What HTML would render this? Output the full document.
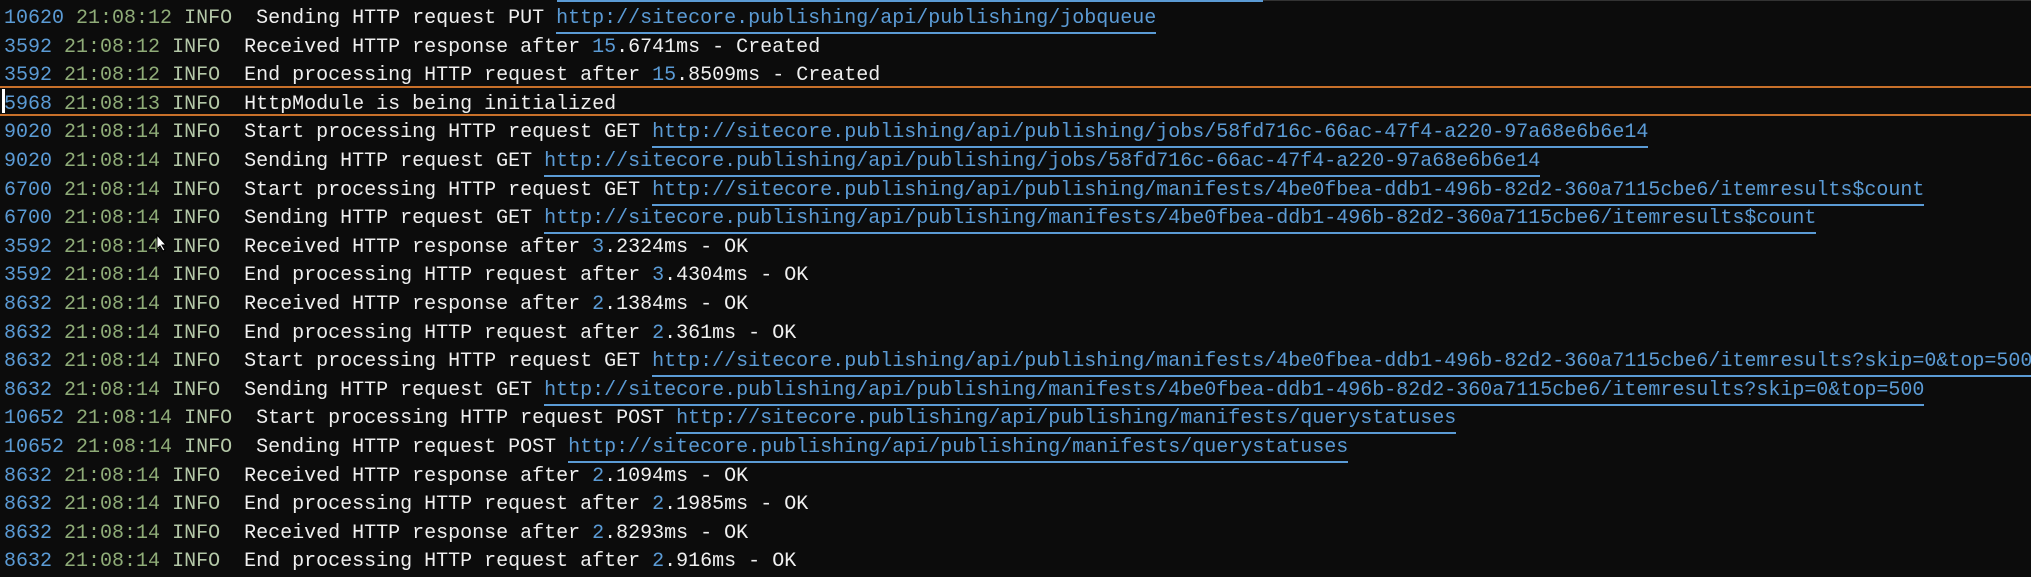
<!DOCTYPE html>
<html><head><meta charset="utf-8"><style>
html,body{margin:0;padding:0;background:#0c0c0c;width:2031px;height:572px;overflow:hidden}
.r{position:absolute;left:4px;height:28.6px;line-height:27px;font-family:"Liberation Mono","DejaVu Sans Mono",monospace;font-size:20px;color:#f0f0f0;white-space:pre}
.p{color:#5b9bd5}.t{color:#8fac78}.i{color:#b4c8a8}.n{color:#5b9bd5}
.u{color:#5b9bd5;display:inline-block;border-bottom:2px solid #5b9bd5;line-height:26px}
</style></head><body>
<div style="position:absolute;left:557px;top:0;width:706px;height:2px;background:#5b9bd5"></div>
<div style="position:absolute;left:1263px;top:0;width:768px;height:1px;background:#333"></div>
<div style="position:absolute;left:0;top:86px;width:2031px;height:1.5px;background:#c8702a"></div>
<div style="position:absolute;left:0;top:114px;width:2031px;height:1.5px;background:#c8702a"></div>
<div style="position:absolute;left:2px;top:89px;width:3px;height:24px;background:#fff"></div>
<div class="r" style="top:5px"><span class="p">10620</span> <span class="t">21:08:12</span> <span class="i">INFO</span>  Sending HTTP request PUT <span class="u">http://sitecore.publishing/api/publishing/jobqueue</span></div>
<div class="r" style="top:33.6px"><span class="p">3592</span> <span class="t">21:08:12</span> <span class="i">INFO</span>  Received HTTP response after <span class="n">15</span>.6741ms - Created</div>
<div class="r" style="top:62.2px"><span class="p">3592</span> <span class="t">21:08:12</span> <span class="i">INFO</span>  End processing HTTP request after <span class="n">15</span>.8509ms - Created</div>
<div class="r" style="top:90.8px"><span class="p">5968</span> <span class="t">21:08:13</span> <span class="i">INFO</span>  HttpModule is being initialized</div>
<div class="r" style="top:119.4px"><span class="p">9020</span> <span class="t">21:08:14</span> <span class="i">INFO</span>  Start processing HTTP request GET <span class="u">http://sitecore.publishing/api/publishing/jobs/58fd716c-66ac-47f4-a220-97a68e6b6e14</span></div>
<div class="r" style="top:148px"><span class="p">9020</span> <span class="t">21:08:14</span> <span class="i">INFO</span>  Sending HTTP request GET <span class="u">http://sitecore.publishing/api/publishing/jobs/58fd716c-66ac-47f4-a220-97a68e6b6e14</span></div>
<div class="r" style="top:176.6px"><span class="p">6700</span> <span class="t">21:08:14</span> <span class="i">INFO</span>  Start processing HTTP request GET <span class="u">http://sitecore.publishing/api/publishing/manifests/4be0fbea-ddb1-496b-82d2-360a7115cbe6/itemresults$count</span></div>
<div class="r" style="top:205.2px"><span class="p">6700</span> <span class="t">21:08:14</span> <span class="i">INFO</span>  Sending HTTP request GET <span class="u">http://sitecore.publishing/api/publishing/manifests/4be0fbea-ddb1-496b-82d2-360a7115cbe6/itemresults$count</span></div>
<div class="r" style="top:233.8px"><span class="p">3592</span> <span class="t">21:08:14</span> <span class="i">INFO</span>  Received HTTP response after <span class="n">3</span>.2324ms - OK</div>
<div class="r" style="top:262.4px"><span class="p">3592</span> <span class="t">21:08:14</span> <span class="i">INFO</span>  End processing HTTP request after <span class="n">3</span>.4304ms - OK</div>
<div class="r" style="top:291px"><span class="p">8632</span> <span class="t">21:08:14</span> <span class="i">INFO</span>  Received HTTP response after <span class="n">2</span>.1384ms - OK</div>
<div class="r" style="top:319.6px"><span class="p">8632</span> <span class="t">21:08:14</span> <span class="i">INFO</span>  End processing HTTP request after <span class="n">2</span>.361ms - OK</div>
<div class="r" style="top:348.2px"><span class="p">8632</span> <span class="t">21:08:14</span> <span class="i">INFO</span>  Start processing HTTP request GET <span class="u">http://sitecore.publishing/api/publishing/manifests/4be0fbea-ddb1-496b-82d2-360a7115cbe6/itemresults?skip=0&amp;top=500</span></div>
<div class="r" style="top:376.8px"><span class="p">8632</span> <span class="t">21:08:14</span> <span class="i">INFO</span>  Sending HTTP request GET <span class="u">http://sitecore.publishing/api/publishing/manifests/4be0fbea-ddb1-496b-82d2-360a7115cbe6/itemresults?skip=0&amp;top=500</span></div>
<div class="r" style="top:405.4px"><span class="p">10652</span> <span class="t">21:08:14</span> <span class="i">INFO</span>  Start processing HTTP request POST <span class="u">http://sitecore.publishing/api/publishing/manifests/querystatuses</span></div>
<div class="r" style="top:434px"><span class="p">10652</span> <span class="t">21:08:14</span> <span class="i">INFO</span>  Sending HTTP request POST <span class="u">http://sitecore.publishing/api/publishing/manifests/querystatuses</span></div>
<div class="r" style="top:462.6px"><span class="p">8632</span> <span class="t">21:08:14</span> <span class="i">INFO</span>  Received HTTP response after <span class="n">2</span>.1094ms - OK</div>
<div class="r" style="top:491.2px"><span class="p">8632</span> <span class="t">21:08:14</span> <span class="i">INFO</span>  End processing HTTP request after <span class="n">2</span>.1985ms - OK</div>
<div class="r" style="top:519.8px"><span class="p">8632</span> <span class="t">21:08:14</span> <span class="i">INFO</span>  Received HTTP response after <span class="n">2</span>.8293ms - OK</div>
<div class="r" style="top:548.4px"><span class="p">8632</span> <span class="t">21:08:14</span> <span class="i">INFO</span>  End processing HTTP request after <span class="n">2</span>.916ms - OK</div>
<svg style="position:absolute;left:156px;top:234px" width="12" height="18" viewBox="0 0 12 18"><path d="M1 1 L1 15 L4 12 L7 17 L9 16 L6 11 L10 11 Z" fill="#fff" stroke="#000" stroke-width="1"/></svg>
</body></html>
